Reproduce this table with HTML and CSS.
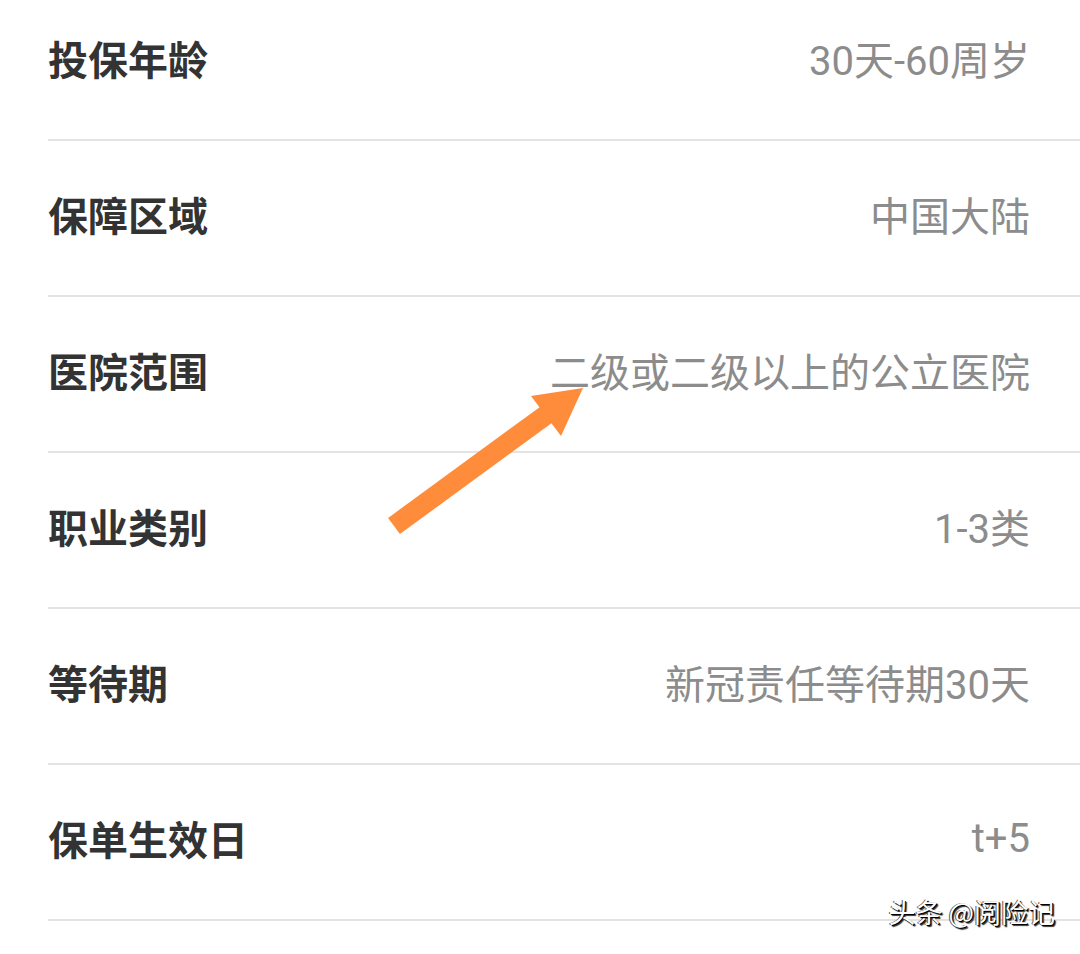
FILE: index.html
```html
<!DOCTYPE html>
<html>
<head>
    <meta charset="utf-8">
    <title>产品信息</title>
    <link rel="stylesheet" href="styles.css">
</head>
<body>
    <div class="page">
        <ul class="info-list">
            <li class="info-row"><span class="label">投保年龄</span><span class="value">30天-60周岁</span></li>
            <li class="info-row"><span class="label">保障区域</span><span class="value">中国大陆</span></li>
            <li class="info-row"><span class="label">医院范围</span><span class="value">二级或二级以上的公立医院</span></li>
            <li class="info-row"><span class="label">职业类别</span><span class="value">1-3类</span></li>
            <li class="info-row"><span class="label">等待期</span><span class="value">新冠责任等待期30天</span></li>
            <li class="info-row"><span class="label">保单生效日</span><span class="value">t+5</span></li>
        </ul>

        <!-- annotation arrow drawn over the list -->
        <svg class="arrow" width="1080" height="954" viewBox="0 0 1080 954">
            <line x1="394" y1="526" x2="550" y2="412" stroke="#ff8c3a" stroke-width="20"/>
            <polygon points="583,388 531,396 561,436" fill="#ff8c3a"/>
        </svg>

        <div class="watermark">头条 @阅险记</div>
    </div>
</body>
</html>
```

FILE: styles.css
```css
body {
    margin: 0;
    padding: 0;
    background-color: #fff;
    font-family: "Noto Sans CJK SC", "Noto Sans", sans-serif;
}

.page {
    position: relative;
    width: 1080px;
    height: 954px;
    overflow: hidden;
}

.info-list {
    list-style: none;
    margin: -15px 0 0 48px;
    padding: 0;
}

.info-row {
    display: flex;
    justify-content: space-between;
    align-items: center;
    height: 146px;
    padding: 0 50px 8px 0;
    border-bottom: 2px solid #e3e3e3;
}

.label {
    font-size: 40px;
    font-weight: bold;
    color: #333;
}

.value {
    font-family: Roboto, "Noto Sans CJK SC", sans-serif;
    font-size: 40px;
    color: #8c8c8c;
}

.arrow {
    position: absolute;
    top: 0;
    left: 0;
}

.watermark {
    position: absolute;
    right: 25px;
    top: 892px;
    font-size: 27px;
    color: #fff;
    text-shadow: 1px 1px 0 #000, 2px 2px 1px #333, -1px 0 0 #555;
}
```
